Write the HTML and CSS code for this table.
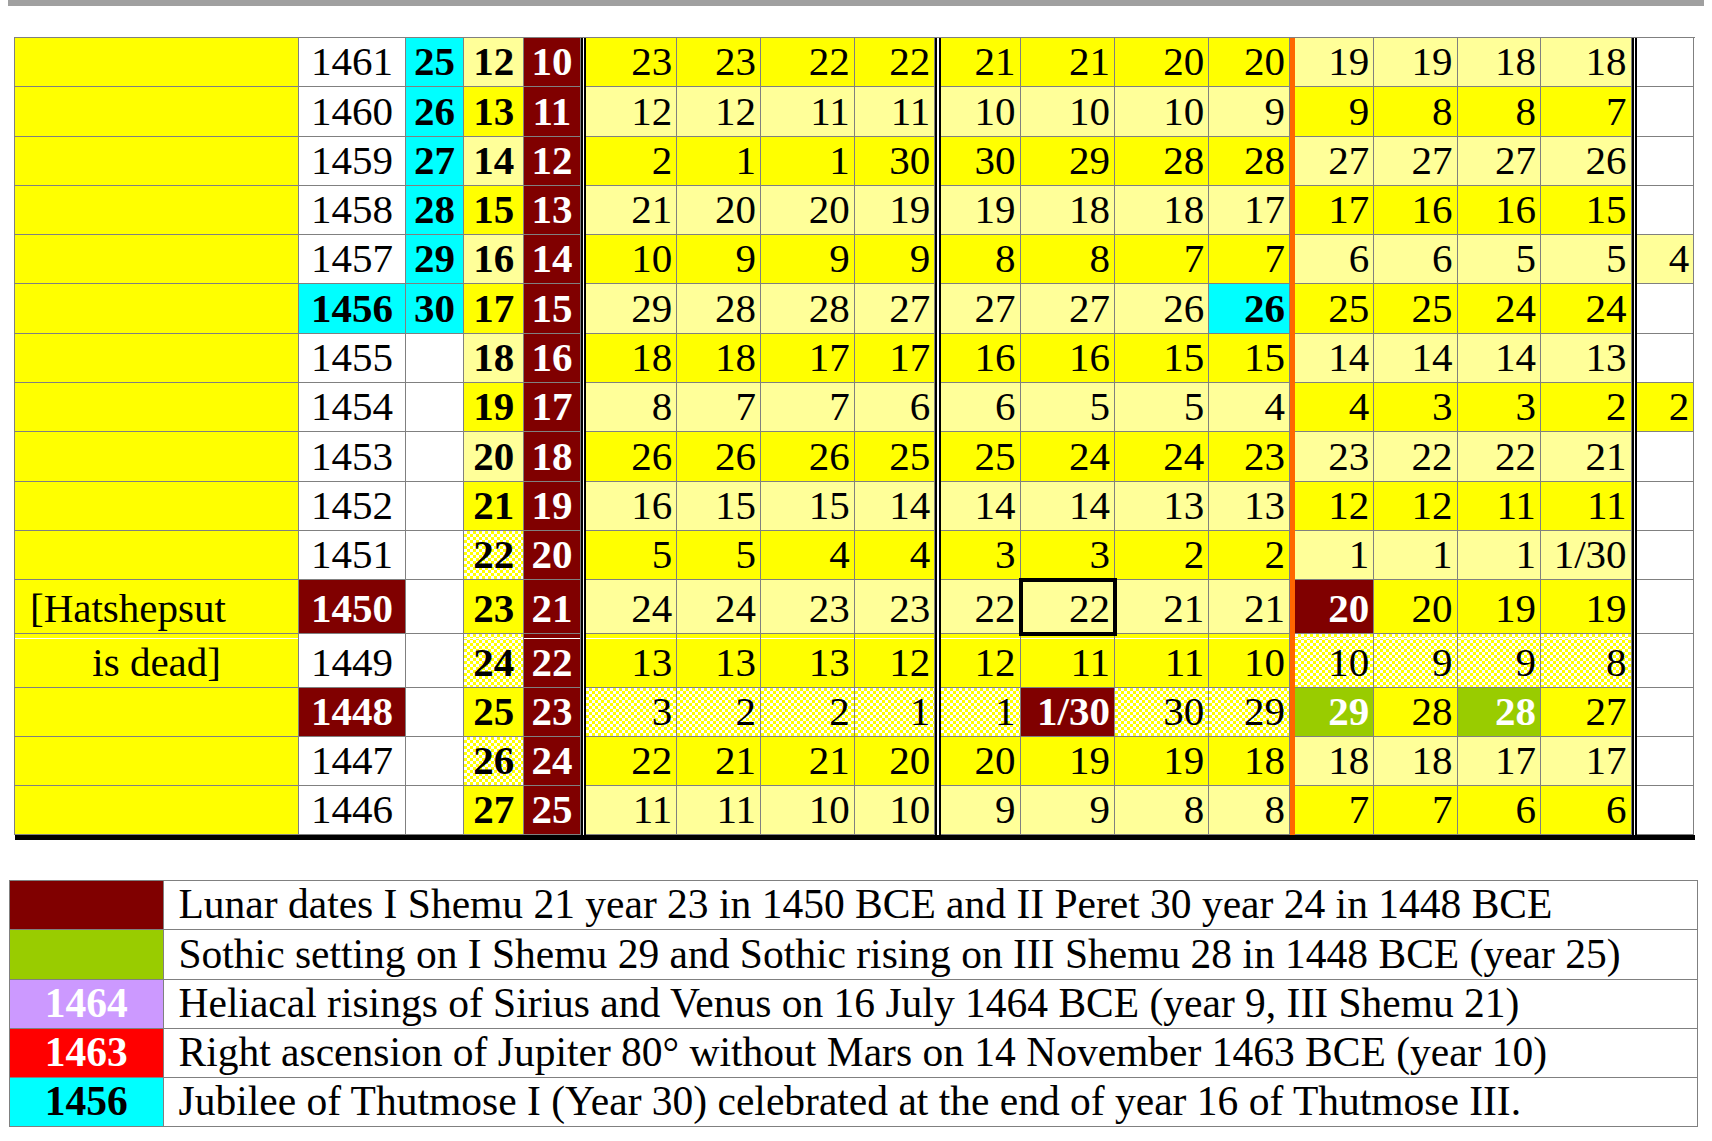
FILE: index.html
```html
<!DOCTYPE html>
<html>
<head>
<meta charset="utf-8">
<title>Thutmose III chronology</title>
<link rel="stylesheet" href="styles.css">
</head>
<body>
<div class="topbar"></div>
<div class="sheet">
  <div class="grid">
    <div class="sep s1"></div>
    <div class="sep s2"></div>
    <div class="sep or"></div>
    <div class="sep s3"></div>

    <!-- 1461 -->
    <div class="c lab y"></div><div class="c ctr w">1461</div><div class="c ctr b cy">25</div><div class="c ctr b ly">12</div><div class="c ctr mr">10</div>
    <div class="c y">23</div><div class="c y">23</div><div class="c y">22</div><div class="c y">22</div>
    <div class="c y">21</div><div class="c y">21</div><div class="c y">20</div><div class="c y">20</div>
    <div class="c ly">19</div><div class="c ly">19</div><div class="c ly">18</div><div class="c ly">18</div>
    <div class="c w"></div>

    <!-- 1460 -->
    <div class="c lab y"></div><div class="c ctr w">1460</div><div class="c ctr b cy">26</div><div class="c ctr b y">13</div><div class="c ctr mr">11</div>
    <div class="c ly">12</div><div class="c ly">12</div><div class="c ly">11</div><div class="c ly">11</div>
    <div class="c ly">10</div><div class="c ly">10</div><div class="c ly">10</div><div class="c ly">9</div>
    <div class="c y">9</div><div class="c y">8</div><div class="c y">8</div><div class="c y">7</div>
    <div class="c w"></div>

    <!-- 1459 -->
    <div class="c lab y"></div><div class="c ctr w">1459</div><div class="c ctr b cy">27</div><div class="c ctr b ly">14</div><div class="c ctr mr">12</div>
    <div class="c y">2</div><div class="c y">1</div><div class="c y">1</div><div class="c y">30</div>
    <div class="c y">30</div><div class="c y">29</div><div class="c y">28</div><div class="c y">28</div>
    <div class="c ly">27</div><div class="c ly">27</div><div class="c ly">27</div><div class="c ly">26</div>
    <div class="c w"></div>

    <!-- 1458 -->
    <div class="c lab y"></div><div class="c ctr w">1458</div><div class="c ctr b cy">28</div><div class="c ctr b y">15</div><div class="c ctr mr">13</div>
    <div class="c ly">21</div><div class="c ly">20</div><div class="c ly">20</div><div class="c ly">19</div>
    <div class="c ly">19</div><div class="c ly">18</div><div class="c ly">18</div><div class="c ly">17</div>
    <div class="c y">17</div><div class="c y">16</div><div class="c y">16</div><div class="c y">15</div>
    <div class="c w"></div>

    <!-- 1457 -->
    <div class="c lab y"></div><div class="c ctr w">1457</div><div class="c ctr b cy">29</div><div class="c ctr b ly">16</div><div class="c ctr mr">14</div>
    <div class="c y">10</div><div class="c y">9</div><div class="c y">9</div><div class="c y">9</div>
    <div class="c y">8</div><div class="c y">8</div><div class="c y">7</div><div class="c y">7</div>
    <div class="c ly">6</div><div class="c ly">6</div><div class="c ly">5</div><div class="c ly">5</div>
    <div class="c ly">4</div>

    <!-- 1456 -->
    <div class="c lab y"></div><div class="c ctr b cy">1456</div><div class="c ctr b cy">30</div><div class="c ctr b y">17</div><div class="c ctr mr">15</div>
    <div class="c ly">29</div><div class="c ly">28</div><div class="c ly">28</div><div class="c ly">27</div>
    <div class="c ly">27</div><div class="c ly">27</div><div class="c ly">26</div><div class="c b cy">26</div>
    <div class="c y">25</div><div class="c y">25</div><div class="c y">24</div><div class="c y">24</div>
    <div class="c w"></div>

    <!-- 1455 -->
    <div class="c lab y"></div><div class="c ctr w">1455</div><div class="c w"></div><div class="c ctr b ly">18</div><div class="c ctr mr">16</div>
    <div class="c y">18</div><div class="c y">18</div><div class="c y">17</div><div class="c y">17</div>
    <div class="c y">16</div><div class="c y">16</div><div class="c y">15</div><div class="c y">15</div>
    <div class="c ly">14</div><div class="c ly">14</div><div class="c ly">14</div><div class="c ly">13</div>
    <div class="c w"></div>

    <!-- 1454 -->
    <div class="c lab y"></div><div class="c ctr w">1454</div><div class="c w"></div><div class="c ctr b y">19</div><div class="c ctr mr">17</div>
    <div class="c ly">8</div><div class="c ly">7</div><div class="c ly">7</div><div class="c ly">6</div>
    <div class="c ly">6</div><div class="c ly">5</div><div class="c ly">5</div><div class="c ly">4</div>
    <div class="c y">4</div><div class="c y">3</div><div class="c y">3</div><div class="c y">2</div>
    <div class="c y">2</div>

    <!-- 1453 -->
    <div class="c lab y"></div><div class="c ctr w">1453</div><div class="c w"></div><div class="c ctr b ly">20</div><div class="c ctr mr">18</div>
    <div class="c y">26</div><div class="c y">26</div><div class="c y">26</div><div class="c y">25</div>
    <div class="c y">25</div><div class="c y">24</div><div class="c y">24</div><div class="c y">23</div>
    <div class="c ly">23</div><div class="c ly">22</div><div class="c ly">22</div><div class="c ly">21</div>
    <div class="c w"></div>

    <!-- 1452 -->
    <div class="c lab y"></div><div class="c ctr w">1452</div><div class="c w"></div><div class="c ctr b y">21</div><div class="c ctr mr">19</div>
    <div class="c ly">16</div><div class="c ly">15</div><div class="c ly">15</div><div class="c ly">14</div>
    <div class="c ly">14</div><div class="c ly">14</div><div class="c ly">13</div><div class="c ly">13</div>
    <div class="c y">12</div><div class="c y">12</div><div class="c y">11</div><div class="c y">11</div>
    <div class="c w"></div>

    <!-- 1451 -->
    <div class="c lab y"></div><div class="c ctr w">1451</div><div class="c w"></div><div class="c ctr b ck">22</div><div class="c ctr mr">20</div>
    <div class="c y">5</div><div class="c y">5</div><div class="c y">4</div><div class="c y">4</div>
    <div class="c y">3</div><div class="c y">3</div><div class="c y">2</div><div class="c y">2</div>
    <div class="c ly">1</div><div class="c ly">1</div><div class="c ly">1</div><div class="c ly">1/30</div>
    <div class="c w"></div>

    <!-- 1450 -->
    <div class="c lab lab-left y">[Hatshepsut</div><div class="c ctr mr">1450</div><div class="c w"></div><div class="c ctr b y">23</div><div class="c ctr mr">21</div>
    <div class="c ly">24</div><div class="c ly">24</div><div class="c ly">23</div><div class="c ly">23</div>
    <div class="c ly">22</div><div class="c ly boxed">22</div><div class="c ly">21</div><div class="c ly">21</div>
    <div class="c mr">20</div><div class="c y">20</div><div class="c y">19</div><div class="c y">19</div>
    <div class="c w"></div>

    <!-- 1449 -->
    <div class="c lab ctr y seam">is dead]</div><div class="c ctr w seam">1449</div><div class="c w seam"></div><div class="c ctr b ck seam">24</div><div class="c ctr mr seam">22</div>
    <div class="c y seam">13</div><div class="c y seam">13</div><div class="c y seam">13</div><div class="c y seam">12</div>
    <div class="c y seam">12</div><div class="c y seam">11</div><div class="c y seam">11</div><div class="c y seam">10</div>
    <div class="c ck seam">10</div><div class="c ck seam">9</div><div class="c ck seam">9</div><div class="c ck seam">8</div>
    <div class="c w seam"></div>

    <!-- 1448 -->
    <div class="c lab y"></div><div class="c ctr mr">1448</div><div class="c w"></div><div class="c ctr b y">25</div><div class="c ctr mr">23</div>
    <div class="c ck">3</div><div class="c ck">2</div><div class="c ck">2</div><div class="c ck">1</div>
    <div class="c ck">1</div><div class="c mr">1/30</div><div class="c ck">30</div><div class="c ck">29</div>
    <div class="c gr">29</div><div class="c y">28</div><div class="c gr">28</div><div class="c y">27</div>
    <div class="c w"></div>

    <!-- 1447 -->
    <div class="c lab y"></div><div class="c ctr w">1447</div><div class="c w"></div><div class="c ctr b ck">26</div><div class="c ctr mr">24</div>
    <div class="c y">22</div><div class="c y">21</div><div class="c y">21</div><div class="c y">20</div>
    <div class="c y">20</div><div class="c y">19</div><div class="c y">19</div><div class="c y">18</div>
    <div class="c ly">18</div><div class="c ly">18</div><div class="c ly">17</div><div class="c ly">17</div>
    <div class="c w"></div>

    <!-- 1446 -->
    <div class="c lab y"></div><div class="c ctr w">1446</div><div class="c w"></div><div class="c ctr b y">27</div><div class="c ctr mr">25</div>
    <div class="c ly">11</div><div class="c ly">11</div><div class="c ly">10</div><div class="c ly">10</div>
    <div class="c ly">9</div><div class="c ly">9</div><div class="c ly">8</div><div class="c ly">8</div>
    <div class="c y">7</div><div class="c y">7</div><div class="c y">6</div><div class="c y">6</div>
    <div class="c w"></div>
  </div>
  <div class="baseline"></div>
</div>

<div class="legend">
  <div class="lc sw mr"></div><div class="lc txt">Lunar dates I Shemu 21 year 23 in 1450 BCE and II Peret 30 year 24 in 1448 BCE</div>
  <div class="lc sw gr"></div><div class="lc txt">Sothic setting on I Shemu 29 and Sothic rising on III Shemu 28 in 1448 BCE (year 25)</div>
  <div class="lc sw lav">1464</div><div class="lc txt">Heliacal risings of Sirius and Venus on 16 July 1464 BCE (year 9, III Shemu 21)</div>
  <div class="lc sw red">1463</div><div class="lc txt">Right ascension of Jupiter 80° without Mars on 14 November 1463 BCE (year 10)</div>
  <div class="lc sw cy">1456</div><div class="lc txt">Jubilee of Thutmose I (Year 30) celebrated at the end of year 16 of Thutmose III.</div>
</div>
</body>
</html>
```

FILE: styles.css
```css
html, body {
  margin: 0;
  padding: 0;
  background: #ffffff;
}

body {
  font-family: "Liberation Serif", "Times New Roman", serif;
  color: #000;
}

.topbar {
  height: 6px;
  margin: 0 8px;
  background: #a0a0a0;
}

.sheet {
  margin: 31px 0 0 14px;
  width: 1681px;
}

.grid {
  display: grid;
  grid-template-columns:
    284.3px 106.4px 58.6px 59.7px 57px 5px
    91.3px 83.7px 93.7px 80.6px 5.7px
    79.7px 94.3px 94.3px 80.7px 5px
    79.3px 83.4px 83.3px 90.7px 5px
    57.6px;
  grid-template-rows: repeat(11, 49.3px) 53.5px 54.5px repeat(3, 49px);
  border-top: 1px solid #808080;
  border-left: 1px solid #808080;
}

.sep {
  grid-row: 1 / -1;
  box-sizing: border-box;
  background: #ffffff;
  border-left: 2px solid #000;
  border-right: 2px solid #000;
}

.s1 { grid-column: 6; }
.s2 { grid-column: 11; }
.s3 { grid-column: 21; }
.or {
  grid-column: 16;
  background: #ff6600;
  border: 0;
}

.c {
  box-sizing: border-box;
  display: flex;
  align-items: flex-end;
  justify-content: flex-end;
  padding: 0 4px 1px 4px;
  border-right: 1px solid #808080;
  border-bottom: 1px solid #808080;
  font-size: 41px;
  line-height: normal;
  white-space: nowrap;
  overflow: visible;
}

.ctr { justify-content: center; }
.b { font-weight: bold; }

.lab-left {
  justify-content: flex-start;
  padding-left: 15px;
}

.y  { background-color: #ffff00; }
.ly { background-color: #ffff99; }
.w  { background-color: #ffffff; }
.cy { background-color: #00ffff; }
.mr { background-color: #800000; color: #ffffff; font-weight: bold; }
.gr { background-color: #99cc00; color: #ffffff; font-weight: bold; }
.lav { background-color: #cc99ff; color: #ffffff; font-weight: bold; }
.red { background-color: #ff0000; color: #ffffff; font-weight: bold; }

.ck {
  background-color: #ffffff;
  background-image: repeating-conic-gradient(#ffff00 0 25%, #ffffff 0 50%);
  background-size: 6px 6px;
}

.seam {
  background-image: linear-gradient(#ffffff, #ffffff);
  background-size: 100% 1px;
  background-position: 0 4px;
  background-repeat: no-repeat;
}

.ck.seam {
  background-image:
    linear-gradient(#ffffff, #ffffff),
    repeating-conic-gradient(#ffff00 0 25%, #ffffff 0 50%);
  background-size: 100% 1px, 6px 6px;
  background-position: 0 4px, 0 0;
  background-repeat: no-repeat, repeat;
}

.boxed {
  position: relative;
  z-index: 1;
  outline: 4px solid #000;
  outline-offset: -2px;
}

.baseline {
  height: 5px;
  background: #000;
  margin-left: 1px;
  width: 1680px;
}

.legend {
  display: grid;
  grid-template-columns: 153.5px 1fr;
  grid-auto-rows: 49.2px;
  margin: 40px 0 0 9px;
  width: 1689px;
  box-sizing: border-box;
  border-top: 1px solid #808080;
  border-left: 1px solid #808080;
}

.lc {
  box-sizing: border-box;
  display: flex;
  align-items: flex-end;
  border-right: 1px solid #808080;
  border-bottom: 1px solid #808080;
  font-size: 41.5px;
  line-height: normal;
  padding-bottom: 1px;
  white-space: nowrap;
}

.sw {
  justify-content: center;
}

.sw.cy {
  color: #000;
  font-weight: bold;
}

.txt {
  padding-left: 15px;
}
```
